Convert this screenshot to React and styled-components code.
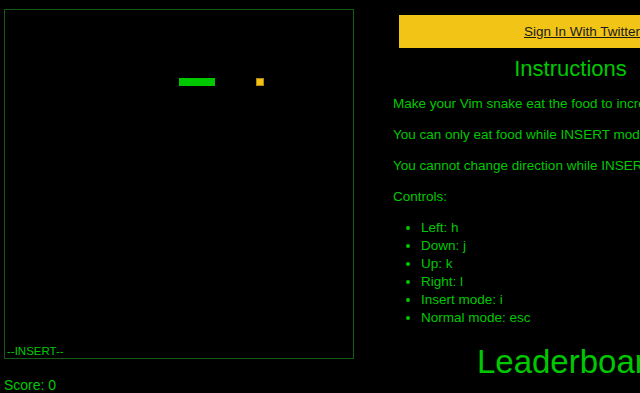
import styled, { createGlobalStyle } from "styled-components";

const GlobalStyle = createGlobalStyle`
  html, body {
    margin: 0;
    padding: 0;
    background: #000;
    overflow: hidden;
  }
  body {
    font-family: "Liberation Sans", Arial, sans-serif;
    color: #00c800;
  }
`;

const CELL = 7;

const snake = [
  { x: 25, y: 10 },
  { x: 26, y: 10 },
  { x: 27, y: 10 },
  { x: 28, y: 10 },
  { x: 29, y: 10 },
];
const food = { x: 36, y: 10 };

const controls = [
  "Left: h",
  "Down: j",
  "Up: k",
  "Right: l",
  "Insert mode: i",
  "Normal mode: esc",
];

export default function App() {
  return (
    <>
      <GlobalStyle />
      <Page>
        <GameColumn>
          <Board>
            {snake.map((s, i) => (
              <Segment
                key={i}
                style={{ left: s.x * CELL - 1, top: s.y * CELL - 2 }}
              />
            ))}
            <Food style={{ left: food.x * CELL - 1, top: food.y * CELL - 2 }} />
            <Mode>--INSERT--</Mode>
          </Board>
          <Score>Score: 0</Score>
        </GameColumn>
        <SideColumn>
          <TwitterBtn>
            <span>Sign In With Twitter</span>
          </TwitterBtn>
          <Title>Instructions</Title>
          <Text>Make your Vim snake eat the food to increase your score!</Text>
          <Text>You can only eat food while INSERT mode is on.</Text>
          <Text>You cannot change direction while INSERT mode is on.</Text>
          <Text>Controls:</Text>
          <Controls>
            {controls.map((c) => (
              <li key={c}>{c}</li>
            ))}
          </Controls>
          <BigTitle>Leaderboard</BigTitle>
        </SideColumn>
      </Page>
    </>
  );
}

const Page = styled.div`
  display: flex;
  align-items: flex-start;
  width: 640px;
  height: 393px;
  overflow: hidden;
`;

const GameColumn = styled.div`
  flex-shrink: 0;
  padding: 9px 0 0 4px;
`;

const Board = styled.div`
  position: relative;
  box-sizing: border-box;
  width: 350px;
  height: 350px;
  border: 1px solid #145a14;
  background: #000;
`;

const Segment = styled.div`
  position: absolute;
  width: 8px;
  height: 8px;
  background: #00c800;
`;

const Food = styled.div`
  position: absolute;
  box-sizing: border-box;
  width: 8px;
  height: 8px;
  background: #f2c314;
  border: 1px solid #b08a0a;
`;

const Mode = styled.div`
  position: absolute;
  left: 2px;
  bottom: 0;
  font-size: 11.5px;
  line-height: 14px;
  color: #00c800;
`;

const Score = styled.div`
  margin-top: 17px;
  font-size: 14px;
  line-height: 18px;
`;

const SideColumn = styled.div`
  flex-shrink: 0;
  width: 355px;
  margin-left: 39px;
`;

const TwitterBtn = styled.button`
  display: block;
  width: 366px;
  height: 33px;
  margin: 15px 0 0 6px;
  padding: 0;
  border: none;
  background: #f2c416;
  color: #1a1a1a;
  font-family: "Liberation Sans", Arial, sans-serif;
  font-size: 13.5px;
  text-align: center;
  cursor: pointer;
  span {
    text-decoration: underline;
  }
`;

const Title = styled.h2`
  margin: 8px 0 0;
  font-size: 22px;
  line-height: 26px;
  font-weight: 400;
  text-align: center;
`;

const Text = styled.p`
  margin: 13px 0;
  font-size: 13.5px;
  line-height: 18px;
  white-space: nowrap;
`;

const Controls = styled.ul`
  margin: 13px 0;
  padding-left: 28px;
  font-size: 13.5px;
  line-height: 18px;
  li {
    white-space: nowrap;
  }
`;

const BigTitle = styled.h1`
  margin: 16px 0 0;
  font-size: 33px;
  line-height: 37px;
  font-weight: 400;
  text-align: center;
  white-space: nowrap;
`;
